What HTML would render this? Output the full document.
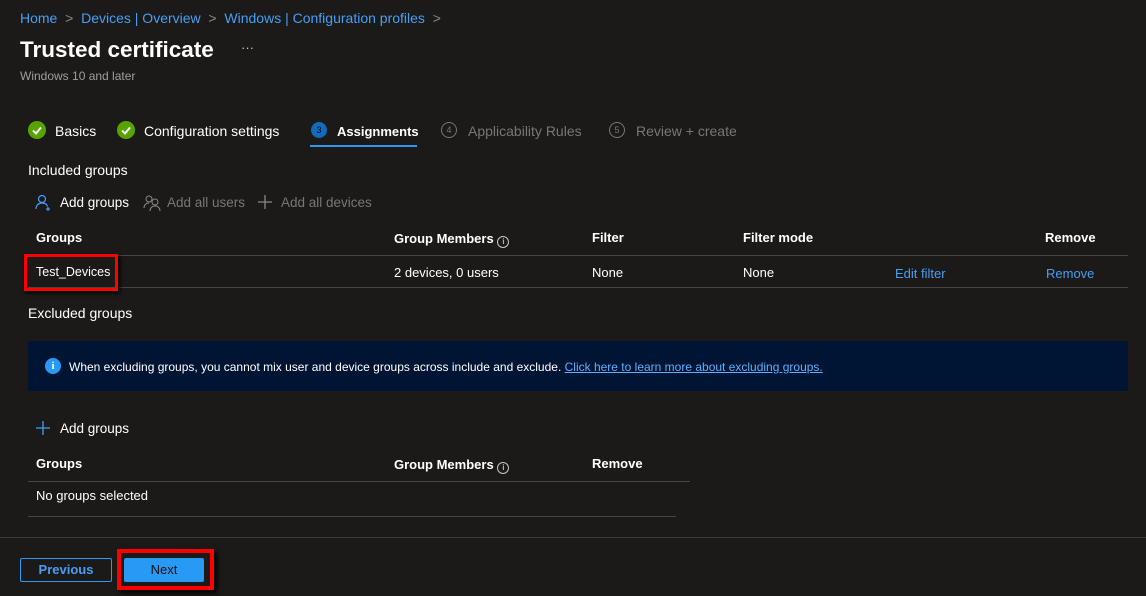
<!DOCTYPE html>
<html><head><meta charset="utf-8"><style>
*{margin:0;padding:0;box-sizing:border-box}
body{width:1146px;height:596px;background:#1b1a19;font-family:"Liberation Sans",sans-serif;color:#fff;position:relative;overflow:hidden;font-size:13px}
.a{position:absolute;white-space:nowrap}
.lnk{color:#479ef5}
.dim{color:#797775}
.b{font-weight:bold}
.line{position:absolute;height:1px;background:#484644}
.chk{position:absolute;width:18px;height:18px;border-radius:50%;background:#57a300}
.num{position:absolute;width:16px;height:16px;border-radius:50%;font-size:9px;text-align:center;line-height:16px}
</style></head><body>
<div class="a lnk" style="left:20px;top:10px;font-size:14px">Home <span style="color:#8a8886">&nbsp;&gt;&nbsp;</span> Devices | Overview <span style="color:#8a8886">&nbsp;&gt;&nbsp;</span> Windows | Configuration profiles <span style="color:#8a8886">&nbsp;&gt;</span></div>
<div class="a b" style="left:20px;top:37px;font-size:22.5px">Trusted certificate</div>
<div class="a" style="left:241px;top:40px;color:#c8c6c4">···</div>
<div class="a" style="left:20px;top:69px;font-size:12px;color:#a19f9d">Windows 10 and later</div>

<div class="chk" style="left:28px;top:121px"><svg width="18" height="18"><path d="M5 9.5l3 3 5-6" stroke="#fff" stroke-width="2" fill="none"/></svg></div>
<div class="a" style="left:55px;top:123px;font-size:14px">Basics</div>
<div class="chk" style="left:117px;top:121px"><svg width="18" height="18"><path d="M5 9.5l3 3 5-6" stroke="#fff" stroke-width="2" fill="none"/></svg></div>
<div class="a" style="left:144px;top:123px;font-size:14px">Configuration settings</div>
<div class="num" style="left:311px;top:122px;background:#0f6cbd;color:#000">3</div>
<div class="a b" style="left:337px;top:124px;font-size:13px">Assignments</div>
<div style="position:absolute;left:310px;top:145px;width:107px;height:2px;background:#2899f5"></div>
<div class="num" style="left:441px;top:122px;border:1px solid #797775;color:#797775;line-height:14px">4</div>
<div class="a dim" style="left:468px;top:123px;font-size:14px">Applicability Rules</div>
<div class="num" style="left:609px;top:122px;border:1px solid #797775;color:#797775;line-height:14px">5</div>
<div class="a dim" style="left:636px;top:123px;font-size:14px">Review + create</div>

<div class="a" style="left:28px;top:162px;font-size:14px">Included groups</div>
<svg class="a" style="left:35px;top:194px" width="18" height="18"><circle cx="7" cy="5" r="3.5" stroke="#479ef5" fill="none" stroke-width="1.2"/><path d="M1 15c0-4 3-6 6-6s5 1.5 5.5 3.5M13 13v4M11 15h4" stroke="#479ef5" fill="none" stroke-width="1.2"/></svg>
<div class="a" style="left:60px;top:195px;font-size:13.5px">Add groups</div>
<svg class="a" style="left:143px;top:194px" width="18" height="18"><circle cx="6" cy="5" r="3" stroke="#8a8886" fill="none"/><circle cx="12" cy="8" r="3" stroke="#8a8886" fill="none"/><path d="M1 14c0-3 2-5 5-5M7 17c0-3 2-5 5-5s5 2 5 5" stroke="#8a8886" fill="none"/></svg>
<div class="a dim" style="left:167px;top:195px;font-size:13.5px">Add all users</div>
<svg class="a" style="left:257px;top:194px" width="16" height="16"><path d="M8 1v14M1 8h14" stroke="#8a8886" stroke-width="1.3"/></svg>
<div class="a dim" style="left:281px;top:195px;font-size:13.5px">Add all devices</div>

<div class="a b" style="left:36px;top:230px">Groups</div>
<div class="a b" style="left:394px;top:231px">Group Members <span style="display:inline-block;width:12px;height:12px;border:1px solid #c8c6c4;border-radius:50%;font-size:8px;text-align:center;line-height:10px;font-weight:normal;vertical-align:-1px">i</span></div>
<div class="a b" style="left:592px;top:230px">Filter</div>
<div class="a b" style="left:743px;top:230px">Filter mode</div>
<div class="a b" style="left:1045px;top:230px">Remove</div>
<div class="line" style="left:28px;top:255px;width:1100px"></div>
<div class="a" style="left:36px;top:265px;font-size:12.5px">Test_Devices</div>
<div class="a" style="left:394px;top:265px">2 devices, 0 users</div>
<div class="a" style="left:592px;top:265px">None</div>
<div class="a" style="left:743px;top:265px">None</div>
<div class="a lnk" style="left:895px;top:266px">Edit filter</div>
<div class="a lnk" style="left:1046px;top:266px">Remove</div>
<div class="line" style="left:28px;top:287px;width:1100px"></div>
<div style="position:absolute;left:24px;top:254px;width:94px;height:37px;border:3px solid #f00;box-shadow:2px 2px 4px #000"></div>

<div class="a" style="left:28px;top:305px;font-size:14px">Excluded groups</div>
<div style="position:absolute;left:28px;top:341px;width:1100px;height:50px;background:#001533"></div>
<div style="position:absolute;left:45px;top:358px;width:16px;height:16px;border-radius:50%;background:#2899f5;color:#fff;font-size:11px;font-weight:bold;text-align:center;line-height:16px;font-family:'Liberation Serif',serif">i</div>
<div class="a" style="left:69px;top:360px;font-size:12px">When excluding groups, you cannot mix user and device groups across include and exclude. <span style="color:#5caeff;text-decoration:underline">Click here to learn more about excluding groups.</span></div>

<svg class="a" style="left:35px;top:420px" width="16" height="16"><path d="M8 1v14M1 8h14" stroke="#479ef5" stroke-width="1.3"/></svg>
<div class="a" style="left:60px;top:421px;font-size:13.5px">Add groups</div>
<div class="a b" style="left:36px;top:456px">Groups</div>
<div class="a b" style="left:394px;top:457px">Group Members <span style="display:inline-block;width:12px;height:12px;border:1px solid #c8c6c4;border-radius:50%;font-size:8px;text-align:center;line-height:10px;font-weight:normal;vertical-align:-1px">i</span></div>
<div class="a b" style="left:592px;top:456px">Remove</div>
<div class="line" style="left:28px;top:481px;width:662px"></div>
<div class="a" style="left:36px;top:488px">No groups selected</div>
<div class="line" style="left:28px;top:516px;width:648px"></div>

<div class="line" style="left:0;top:537px;width:1146px;background:#3b3a39"></div>
<div style="position:absolute;left:20px;top:558px;width:92px;height:24px;border:1px solid #2899f5;border-radius:2px;color:#479ef5;font-weight:bold;text-align:center;line-height:22px">Previous</div>
<div style="position:absolute;left:117px;top:549px;width:97px;height:41px;border:4px solid #f00;box-shadow:3px 3px 5px #000"></div>
<div style="position:absolute;left:124px;top:558px;width:80px;height:24px;background:#2899f5;border-radius:2px;color:#111;text-align:center;line-height:24px;font-size:13px">Next</div>
</body></html>
